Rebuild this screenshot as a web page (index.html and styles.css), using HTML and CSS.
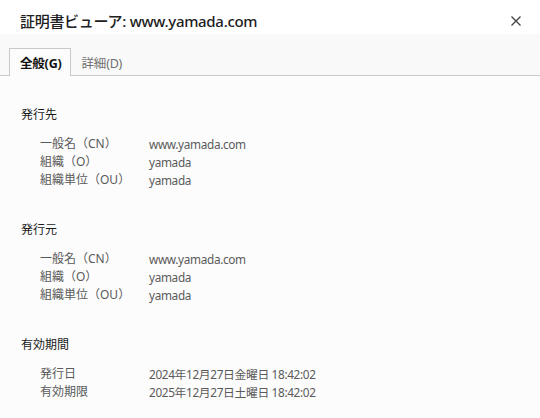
FILE: index.html
```html
<!DOCTYPE html>
<html lang="ja">
<head>
  <meta charset="UTF-8">
  <title>証明書ビューア</title>
  <link rel="stylesheet" href="styles.css">
</head>
<body>
  <header class="titlebar">
    <h1>証明書ビューア: www.yamada.com</h1>
    <button class="close" aria-label="閉じる">
      <svg width="10" height="10" viewBox="0 0 10 10">
        <path d="M0.5 0.5 L9.5 9.5 M9.5 0.5 L0.5 9.5" stroke="#444" stroke-width="1.4" fill="none"/>
      </svg>
    </button>
  </header>

  <nav class="tabs">
    <div class="tab active">全般(G)</div>
    <div class="tab">詳細(D)</div>
  </nav>

  <main class="content">
    <section class="group">
      <h2>発行先</h2>
      <div class="rows">
        <span class="label">一般名（CN）</span><span class="value">www.yamada.com</span>
        <span class="label">組織（O）</span><span class="value">yamada</span>
        <span class="label">組織単位（OU）</span><span class="value">yamada</span>
      </div>
    </section>

    <section class="group">
      <h2>発行元</h2>
      <div class="rows">
        <span class="label">一般名（CN）</span><span class="value">www.yamada.com</span>
        <span class="label">組織（O）</span><span class="value">yamada</span>
        <span class="label">組織単位（OU）</span><span class="value">yamada</span>
      </div>
    </section>

    <section class="group">
      <h2>有効期間</h2>
      <div class="rows">
        <span class="label">発行日</span><span class="value">2024年12月27日金曜日 18:42:02</span>
        <span class="label">有効期限</span><span class="value">2025年12月27日土曜日 18:42:02</span>
      </div>
    </section>
  </main>
</body>
</html>
```

FILE: styles.css
```css
:root {
  --title-bg: #ffffff;
  --tabs-bg: #f9f9f9;
  --page-bg: #fcfcfc;
  --line: #c9c9c9;
  --heading: #1a1a1a;
  --text: #5a5a5a;
}

* {
  box-sizing: border-box;
}

html, body {
  margin: 0;
  height: 100%;
}

body {
  background: var(--page-bg);
  font-family: "Noto Sans", "Noto Sans CJK JP", sans-serif;
  color: var(--text);
  overflow: hidden;
}

.titlebar {
  height: 34px;
  background: var(--title-bg);
  display: flex;
  align-items: center;
  justify-content: space-between;
  padding: 0 19px 0 20px;
}

.titlebar h1 {
  margin: 0;
  margin-top: 8px;
  font-size: 15px;
  font-weight: 500;
  letter-spacing: -0.3px;
  color: #202020;
  line-height: 20px;
}

.close {
  border: none;
  background: none;
  padding: 0;
  margin-top: 8px;
  width: 10px;
  height: 10px;
  display: flex;
}

.tabs {
  height: 42px;
  background: var(--tabs-bg);
  border-bottom: 1px solid var(--line);
  display: flex;
  align-items: flex-end;
  padding-left: 9px;
}

.tab {
  height: 28px;
  padding: 0 10px;
  display: flex;
  align-items: center;
  font-size: 12.5px;
  letter-spacing: -0.2px;
  color: #707070;
  margin-bottom: -1px;
  border: 1px solid transparent;
  border-bottom: none;
}

.tab.active {
  background: var(--page-bg);
  border-color: var(--line);
  color: #111;
  font-weight: 700;
  padding: 0 8px 0 10px;
}

.content {
  padding: 30px 21px 0;
}

.group + .group {
  margin-top: 32px;
}

.group h2 {
  margin: 0;
  height: 18px;
  font-size: 12px;
  font-weight: 400;
  line-height: 18px;
  color: var(--heading);
}

.rows {
  margin-top: 11px;
  padding-left: 19px;
  display: grid;
  grid-template-columns: 109px auto;
  grid-auto-rows: 18px;
  font-size: 12px;
  line-height: 18px;
  color: var(--text);
}

.value {
  font-size: 11.8px;
  letter-spacing: -0.35px;
}
```
